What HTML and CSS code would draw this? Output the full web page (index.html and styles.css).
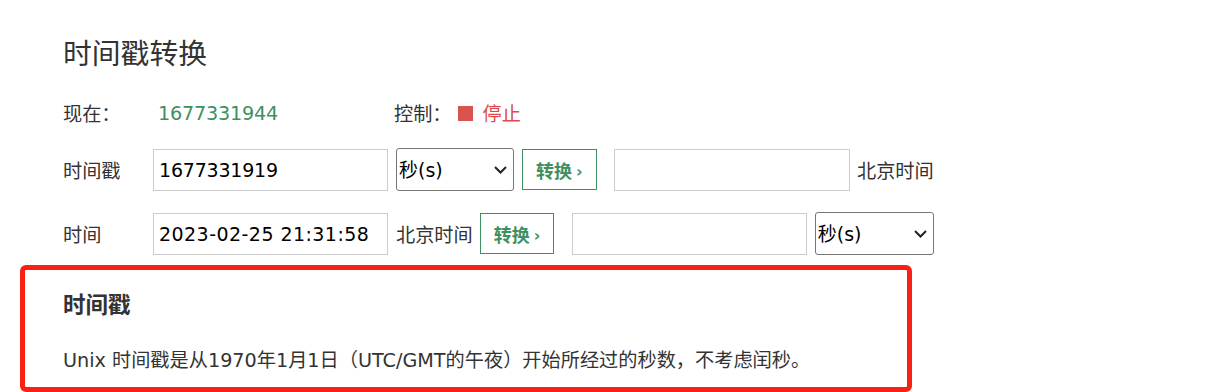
FILE: index.html
```html
<!DOCTYPE html>
<html lang="zh-CN">
<head>
    <meta charset="UTF-8">
    <meta name="viewport" content="width=device-width, initial-scale=1.0">
    <title>时间戳转换</title>
    <link rel="stylesheet" href="styles.css">
</head>
<body>
    <div class="page">
        <h1 class="page-title">时间戳转换</h1>

        <div class="row now-row">
            <span class="label">现在：</span>
            <span class="now-value">1677331944</span>
            <span class="ctrl-label">控制：</span>
            <button class="stop-btn"><span class="stop-icon"></span>停止</button>
        </div>

        <div class="row row-ts">
            <span class="label">时间戳</span>
            <input class="field" type="text" value="1677331919">
            <div class="select-wrap">
                <select class="unit">
                    <option>秒(s)</option>
                    <option>毫秒(ms)</option>
                </select>
                <svg class="chevron" width="13" height="8" viewBox="0 0 13 8"><path d="M1 1l5.5 5.5L12 1" fill="none" stroke="#222" stroke-width="2"/></svg>
            </div>
            <button class="convert-btn">转换 <span class="arrow">›</span></button>
            <input class="field field-gap" type="text" value="">
            <span class="zone">北京时间</span>
        </div>

        <div class="row row-time">
            <span class="label">时间</span>
            <input class="field field-date" type="text" value="2023-02-25 21:31:58">
            <span class="zone zone-mid">北京时间</span>
            <button class="convert-btn convert-small">转换 <span class="arrow">›</span></button>
            <input class="field field-gap2" type="text" value="">
            <div class="select-wrap">
                <select class="unit unit-wide">
                    <option>秒(s)</option>
                    <option>毫秒(ms)</option>
                </select>
                <svg class="chevron" width="13" height="8" viewBox="0 0 13 8"><path d="M1 1l5.5 5.5L12 1" fill="none" stroke="#222" stroke-width="2"/></svg>
            </div>
        </div>
    </div>

    <div class="intro">
        <h3 class="intro-title">时间戳</h3>
        <p class="intro-text">Unix 时间戳是从1970年1月1日（UTC/GMT的午夜）开始所经过的秒数，不考虑闰秒。</p>
    </div>
</body>
</html>
```

FILE: styles.css
```css
body {
    margin: 0;
    background: #fff;
    color: #333;
    font-family: "DejaVu Sans", "Noto Sans CJK SC", sans-serif;
    font-size: 19.2px;
}

.page {
    padding: 37px 0 0 63px;
}

.page-title {
    margin: 0;
    font-size: 28.8px;
    font-weight: normal;
    line-height: 34px;
    color: #333;
}

.row {
    display: flex;
    align-items: center;
    height: 43px;
    margin-top: 20px;
}

.now-row {
    height: 26px;
    margin-top: 29px;
    margin-bottom: 2px;
}

.row-ts {
    margin-top: 22px;
}

.row-time {
    margin-top: 21px;
}

.label {
    width: 90px;
    flex-shrink: 0;
}

.now-row .label {
    width: 95px;
}

.now-value {
    width: 236px;
    color: #3e9060;
    letter-spacing: -0.2px;
}

.ctrl-label {
    margin-right: 6px;
}

.stop-btn {
    display: flex;
    align-items: center;
    gap: 10px;
    padding: 0;
    border: none;
    background: none;
    font: inherit;
    color: #e04a4a;
}

.stop-icon {
    width: 15px;
    height: 15px;
    background: #d9534f;
}

.field {
    box-sizing: border-box;
    width: 235px;
    height: 42px;
    padding: 0 5px;
    border: 1px solid #ccc;
    font-family: "DejaVu Sans", "Noto Sans CJK SC", sans-serif;
    font-size: 19px;
    color: #000;
    letter-spacing: -0.2px;
    outline: none;
}

.field-date {
    letter-spacing: 0.45px;
}

.field-gap {
    margin-left: 17px;
    width: 236px;
}

.field-gap2 {
    margin-left: 18px;
}

.select-wrap {
    position: relative;
    margin-left: 8px;
    height: 43px;
}

.unit {
    box-sizing: border-box;
    width: 118px;
    height: 43px;
    padding: 0 2px;
    border: 1px solid #767676;
    border-radius: 3px;
    background: #fff;
    appearance: none;
    -webkit-appearance: none;
    font-family: "DejaVu Sans", "Noto Sans CJK SC", sans-serif;
    font-size: 19px;
    color: #000;
}

.unit-wide {
    width: 119px;
}

.chevron {
    position: absolute;
    right: 7px;
    top: 18px;
    pointer-events: none;
}

.convert-btn {
    box-sizing: border-box;
    width: 75px;
    height: 41px;
    margin-left: 8px;
    padding: 0 0 0 13px;
    text-align: left;
    border: 1px solid #3e9060;
    background: #fff;
    font-family: "Noto Sans CJK SC", sans-serif;
    font-size: 18px;
    font-weight: bold;
    color: #3e9060;
}

.convert-btn .arrow {
    font-family: "DejaVu Sans", sans-serif;
    font-size: 16px;
    position: relative;
    top: -1px;
}

.convert-small {
    width: 74px;
    margin-left: 7px;
}

.zone {
    margin-left: 7px;
}

.zone-mid {
    margin-left: 8px;
}

.intro {
    box-sizing: border-box;
    width: 892px;
    margin: 10px 0 0 20px;
    padding: 20px 20px 12px 38px;
    border: 5px solid #fa2014;
    border-radius: 6px;
}

.intro-title {
    margin: 0;
    font-size: 22.5px;
    line-height: 30px;
    color: #333;
}

.intro-text {
    margin: 27px 0 0;
    line-height: 28px;
    color: #333;
}
```
